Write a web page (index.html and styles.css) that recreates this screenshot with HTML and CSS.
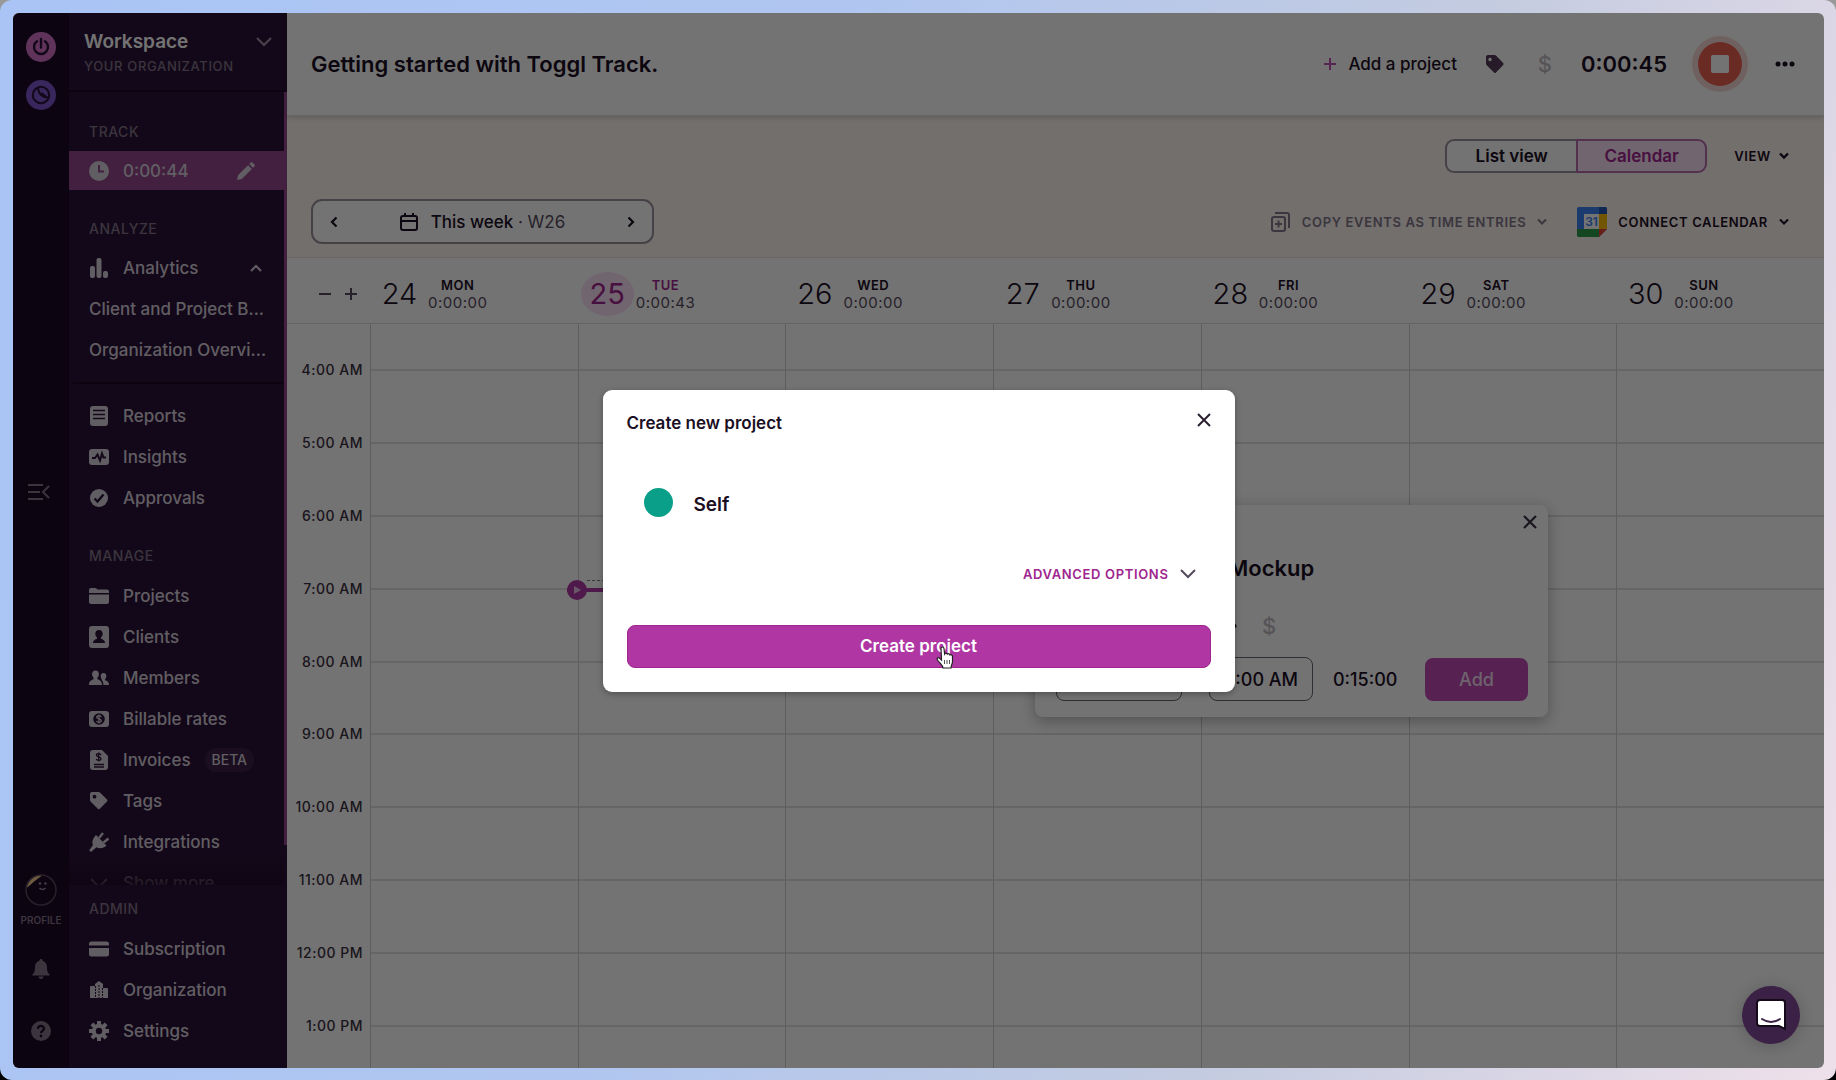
FILE: index.html
```html
<!DOCTYPE html>
<html lang="en">
<head>
    <meta charset="UTF-8">
    <meta name="viewport" content="width=device-width, initial-scale=1.0">
    <title>Toggl Track</title>
    <link rel="stylesheet" href="styles.css">
</head>
<body>
    <div class="app">
        <aside class="rail">
            <a href="#" class="rail-logo" aria-label="Toggl Track">
                <svg width="30" height="30" viewBox="0 0 30 30"><circle cx="15" cy="15" r="15" fill="#d474c8"/><g fill="none" stroke="#2c1338" stroke-width="2.4" stroke-linecap="round"><path d="M11 9.2a7 7 0 1 0 8 0"/><path d="M15 7v8.5"/></g></svg>
            </a>
            <a href="#" class="rail-logo" aria-label="Toggl Plan">
                <svg width="30" height="30" viewBox="0 0 30 30"><circle cx="15" cy="15" r="15" fill="#7e54cc"/><g fill="none" stroke="#2c1338" stroke-width="2"><circle cx="15" cy="15" r="8.2"/><path d="M12 7.500c0 6 4.500 10.500 11 10M15.500 13l6 5"/></g></svg>
            </a>
            <button class="rail-toggle" aria-label="Collapse menu">
                <svg width="22" height="16" viewBox="0 0 22 16" fill="none" stroke="currentColor" stroke-width="2"><path d="M0 1h15M0 8h12M0 15h15M21 2l-6 6 6 6"/></svg>
            </button>
            <a href="#" class="profile">
                <svg width="32" height="32" viewBox="0 0 32 32"><path d="M1.500 14A15 15 0 0 1 17.500 1.200C12 5 6 10 1.500 14z" fill="#f5c98e"/><circle cx="16" cy="16" r="15" fill="none" stroke="#564a5d" stroke-width="1.500"/><g fill="#9c8fa3"><circle cx="15" cy="9.500" r="1.200"/><circle cx="20.500" cy="9.500" r="1.200"/></g><path d="M14.500 14q3 3 6 0" stroke="#9c8fa3" stroke-width="1.500" fill="none"/></svg>
                <span>PROFILE</span>
            </a>
            <button class="rail-btn" aria-label="Notifications">
                <svg width="18" height="20" viewBox="0 0 18 20" fill="currentColor"><path d="M9 0c1 0 1.600.7 1.600 1.700C13.500 2.500 15 5 15 8c0 4 .7 6 2.500 7.300V16.500H.5v-1.200C2.300 14 3 12 3 8c0-3 1.500-5.500 4.400-6.300C7.400.7 8 0 9 0zM6.500 17.500h5a2.500 2.500 0 0 1-5 0z"/></svg>
            </button>
            <button class="rail-btn" aria-label="Help">
                <svg width="20" height="20" viewBox="0 0 20 20"><circle cx="10" cy="10" r="10" fill="currentColor"/><path d="M7 7.800C7 4 13 4 13 7.600c0 2.200-3 2.200-3 4.400" fill="none" stroke="#1d0928" stroke-width="2.200"/><circle cx="10" cy="15" r="1.400" fill="#1d0928"/></svg>
            </button>
        </aside>

        <nav class="sidebar">
            <button class="workspace">
                <span class="workspace-name">Workspace</span>
                <svg width="16" height="10" viewBox="0 0 16 10" fill="none" stroke="#a294a8" stroke-width="2"><path d="M1 1l7 7 7-7"/></svg>
                <span class="workspace-org">YOUR ORGANIZATION</span>
            </button>

            <div class="menu">
                <h2>TRACK</h2>
                <a href="#" class="item active">
                    <svg width="20" height="20" viewBox="0 0 20 20"><circle cx="10" cy="10" r="10" fill="currentColor"/><path d="M10 4v6.500h5" fill="none" stroke="#94478e" stroke-width="2"/></svg>
                    <span>0:00:44</span>
                    <svg class="end" width="18" height="18" viewBox="0 0 18 18" fill="currentColor"><path d="M0 18l1-4.800L11 3.200l3.800 3.800-10 10zM12.300 2l1.500-1.500q.8-.8 1.600 0L17.500 2.600q.8.8 0 1.600L16 5.700z"/></svg>
                </a>
                <h2>ANALYZE</h2>
                <a href="#" class="item">
                    <svg width="20" height="20" viewBox="0 0 20 20" fill="currentColor"><rect x="1" y="8" width="5" height="12" rx="2"/><rect x="7.500" y="0" width="5" height="20" rx="2"/><rect x="14" y="13" width="5" height="7" rx="2"/></svg>
                    <span>Analytics</span>
                    <svg class="caret" width="12" height="8" viewBox="0 0 12 8" fill="none" stroke="currentColor" stroke-width="2"><path d="M1 7l5-5 5 5"/></svg>
                </a>
                <a href="#" class="item"><span>Client and Project B...</span></a>
                <a href="#" class="item"><span>Organization Overvi...</span></a>
                <hr>
                <a href="#" class="item">
                    <svg width="20" height="20" viewBox="0 0 20 20"><rect x="1" y="0" width="18" height="20" rx="3" fill="currentColor"/><path d="M4 4.500h12M4 8.500h12M4 12.500h12" stroke="#2c1338" stroke-width="1.600"/></svg>
                    <span>Reports</span>
                </a>
                <a href="#" class="item">
                    <svg width="20" height="20" viewBox="0 0 20 20"><rect x="0" y="2" width="20" height="16" rx="3" fill="currentColor"/><path d="M3 11h3l2.500-3.500 2.500 6 2-7 1.500 4H17" fill="none" stroke="#2c1338" stroke-width="2"/></svg>
                    <span>Insights</span>
                </a>
                <a href="#" class="item">
                    <svg width="20" height="20" viewBox="0 0 20 20"><circle cx="10" cy="10" r="9" fill="currentColor"/><path d="M5.500 10.500l3 3 6-7" fill="none" stroke="#2c1338" stroke-width="2.400"/></svg>
                    <span>Approvals</span>
                </a>
                <h2 class="manage">MANAGE</h2>
                <a href="#" class="item">
                    <svg width="20" height="20" viewBox="0 0 20 20" fill="currentColor"><path d="M0 7V4q0-2 2-2h4q1.500 0 2.500 1.500h9.500q2 0 2 2V7zM0 8.500h20V16q0 2-2 2H2q-2 0-2-2z"/></svg>
                    <span>Projects</span>
                </a>
                <a href="#" class="item">
                    <svg width="20" height="22" viewBox="0 0 20 22"><rect width="20" height="22" rx="3" fill="currentColor"/><path d="M10 4c2.400 0 3.700 1.600 3.700 3.800 0 1.700-.7 2.800-1.700 3.700v1.300c2 .7 4 1.600 4 4.200H4c0-2.600 2-3.500 4-4.200v-1.300C7 10.600 6.300 9.500 6.300 7.800 6.300 5.600 7.600 4 10 4z" fill="#2c1338"/></svg>
                    <span>Clients</span>
                </a>
                <a href="#" class="item">
                    <svg width="20" height="20" viewBox="0 0 20 20" fill="currentColor"><path d="M6.500 2.500c2.200 0 3.400 1.500 3.400 3.600 0 1.700-.6 2.700-1.500 3.600v1.600c2.500.9 4.600 1.800 4.600 5.700H0c0-3.900 2.100-4.800 4.600-5.700V9.700C3.700 8.800 3.100 7.800 3.100 6.100c0-2.100 1.200-3.600 3.400-3.600z"/><path d="M14.500 5c1.800 0 2.800 1.200 2.800 3 0 1.400-.5 2.200-1.200 3v1.300c2.100.8 3.900 1.500 3.900 4.700h-5.600c0-2.500-.7-4-2-5.200l.5-.8c-.7-.8-1.200-1.600-1.200-3 0-1.800 1-3 2.800-3z"/></svg>
                    <span>Members</span>
                </a>
                <a href="#" class="item">
                    <svg width="20" height="20" viewBox="0 0 20 20"><rect y="2" width="20" height="16" rx="3" fill="currentColor"/><circle cx="10" cy="10" r="5.800" fill="#2c1338"/><path d="M12.300 8.200c-.4-2-4.600-2-4.600 0s4.600 1.500 4.600 3.600-4.300 2-4.700 0M10 5.500v9" fill="none" stroke="currentColor" stroke-width="1.300"/></svg>
                    <span>Billable rates</span>
                </a>
                <a href="#" class="item">
                    <svg width="20" height="20" viewBox="0 0 20 20"><path d="M1 3q0-3 3-3h9l6 6v11q0 3-3 3H4q-3 0-3-3z" fill="currentColor"/><path d="M12 5.200c-.4-2-4.600-2-4.600 0s4.600 1.500 4.600 3.600-4.300 2-4.700 0M9.700 2.500v9M5 14.500h10M5 17h10" fill="none" stroke="#2c1338" stroke-width="1.300"/></svg>
                    <span>Invoices</span>
                    <span class="beta">BETA</span>
                </a>
                <a href="#" class="item">
                    <svg width="20" height="20" viewBox="0 0 20 20" fill="currentColor" fill-rule="evenodd"><path d="M1 3q0-2 2-2h6.500q1 0 1.700.7l6.800 6.800q1 1 0 2l-7.200 7.300q-1 1-2 0L2 11Q1 10 1 9zM5.500 3.800a1.900 1.900 0 1 0 .01 0z"/></svg>
                    <span>Tags</span>
                </a>
                <a href="#" class="item">
                    <svg width="20" height="20" viewBox="0 0 20 20" fill="currentColor"><path d="M7 3l10.500 10.500c-3 3-7 3.600-10 1.700L2 20l-1.800-1.800L4 13C2.500 10 4 6 7 3z"/><path d="M10 6l4-5M14.500 10.500l5-4" stroke="currentColor" stroke-width="2.400"/></svg>
                    <span>Integrations</span>
                </a>
                <a href="#" class="item more">
                    <svg width="20" height="20" viewBox="0 0 20 20" fill="none" stroke="currentColor" stroke-width="2"><path d="M2 6l8 8 8-8"/></svg>
                    <span>Show more</span>
                </a>
            </div>

            <div class="admin">
                <h2>ADMIN</h2>
                <a href="#" class="item">
                    <svg width="20" height="20" viewBox="0 0 20 20" fill="currentColor"><path d="M0 6.500V5q0-2.500 2.500-2.500h15Q20 2.500 20 5v1.500zM0 9h20v6q0 2.500-2.500 2.500h-15Q0 17.500 0 15z"/></svg>
                    <span>Subscription</span>
                </a>
                <a href="#" class="item">
                    <svg width="20" height="20" viewBox="0 0 20 20"><path d="M1 18V7q0-1 1-1h4V4l4-3 4 3v4h4q1 0 1 1v9z" fill="currentColor"/><path d="M6.500 6v12M13.500 8v10M10 5v13" stroke="#2c1338" stroke-width="1" stroke-dasharray="2 1"/></svg>
                    <span>Organization</span>
                </a>
                <a href="#" class="item">
                    <svg width="20" height="20" viewBox="0 0 20 20"><circle cx="10" cy="10" r="5.200" fill="none" stroke="currentColor" stroke-width="4"/><g stroke="currentColor" stroke-width="4"><path d="M10 0v4M10 16v4M0 10h4M16 10h4M2.900 2.900l2.900 2.900M14.200 14.200l2.900 2.900M2.900 17.100l2.900-2.900M14.200 5.800l2.900-2.900"/></g></svg>
                    <span>Settings</span>
                </a>
            </div>
        </nav>

        <main>
            <header class="timer">
                <h1>Getting started with Toggl Track.</h1>
                <button class="add-project">
                    <svg width="12" height="12" viewBox="0 0 12 12" stroke="#c050b5" stroke-width="2"><path d="M6 0v12M0 6h12"/></svg>
                    Add a project
                </button>
                <button class="tool" aria-label="Tags">
                    <svg width="20" height="20" viewBox="0 0 20 20" fill="#553a5c" fill-rule="evenodd"><path d="M1 3q0-2 2-2h6.500q1 0 1.700.7l7 7.300q1 1 0 2l-7.200 7.500q-1 1-2 0L2 11.500Q1 10.500 1 9.500zM5 3.800a1.700 1.700 0 1 0 .01 0z"/></svg>
                </button>
                <button class="tool dollar" aria-label="Billable">$</button>
                <span class="time">0:00:45</span>
                <button class="stop" aria-label="Stop timer"></button>
                <button class="tool dots" aria-label="More">
                    <svg width="20" height="6" viewBox="0 0 20 6" fill="#1c0f24"><circle cx="3" cy="3" r="2.500"/><circle cx="10" cy="3" r="2.500"/><circle cx="17" cy="3" r="2.500"/></svg>
                </button>
            </header>

            <section class="toolbar">
                <div class="toolbar-row">
                    <div class="tabs">
                        <button>List view</button>
                        <button class="selected">Calendar</button>
                    </div>
                    <button class="caps">VIEW
                        <svg width="10" height="8" viewBox="0 0 10 8" fill="none" stroke="currentColor" stroke-width="2.400"><path d="M1 1.500l4 4 4-4"/></svg>
                    </button>
                </div>
                <div class="toolbar-row">
                    <div class="week">
                        <button aria-label="Previous week"><svg width="8" height="12" viewBox="0 0 8 12" fill="none" stroke="currentColor" stroke-width="2.200"><path d="M6.500 1.500L2 6l4.500 4.500"/></svg></button>
                        <button class="week-label">
                            <svg width="18" height="20" viewBox="0 0 18 20" fill="none" stroke="currentColor" stroke-width="2"><rect x="1" y="4" width="16" height="14" rx="2"/><path d="M1 9h16M5 1v4M13 1v4"/></svg>
                            <span>This week <em>· W26</em></span>
                        </button>
                        <button aria-label="Next week"><svg width="8" height="12" viewBox="0 0 8 12" fill="none" stroke="currentColor" stroke-width="2.200"><path d="M1.500 1.500L6 6l-4.500 4.500"/></svg></button>
                    </div>
                    <button class="caps copy">
                        <svg width="20" height="20" viewBox="0 0 20 20" fill="none" stroke="currentColor" stroke-width="2"><rect x="1" y="5" width="13" height="14" rx="2"/><path d="M4 1h12q2 0 2 2v13M7.500 8.500v7M4 12h7"/></svg>
                        COPY EVENTS AS TIME ENTRIES
                        <svg width="10" height="8" viewBox="0 0 10 8" fill="none" stroke="currentColor" stroke-width="2"><path d="M1 1.500l4 4 4-4"/></svg>
                    </button>
                    <button class="caps">
                        <svg width="30" height="30" viewBox="0 0 30 30"><path d="M0 2q0-2 2-2h26q2 0 2 2v20l-8 8H2q-2 0-2-2z" fill="#3c80f2"/><path d="M22 0h6q2 0 2 2v5h-8z" fill="#2458b8"/><path d="M22 7h8v15h-8z" fill="#fbbc04"/><path d="M0 22h22v8H2q-2 0-2-2z" fill="#2c9c4b"/><path d="M22 22h8l-8 8z" fill="#ea4335"/><path d="M7 7h15v15H7z" fill="#fff"/><text x="14.500" y="19" text-anchor="middle" class="gcal">31</text></svg>
                        CONNECT CALENDAR
                        <svg width="10" height="8" viewBox="0 0 10 8" fill="none" stroke="currentColor" stroke-width="2"><path d="M1 1.500l4 4 4-4"/></svg>
                    </button>
                </div>
            </section>

            <div class="days">
                <div class="zoom">
                    <button aria-label="Zoom out"><svg width="12" height="12" viewBox="0 0 12 12" stroke="currentColor" stroke-width="2"><path d="M0 6h12"/></svg></button>
                    <button aria-label="Zoom in"><svg width="12" height="12" viewBox="0 0 12 12" stroke="currentColor" stroke-width="2"><path d="M6 0v12M0 6h12"/></svg></button>
                </div>
                <div class="day"><span class="num">24</span><div><b>MON</b><span>0:00:00</span></div></div>
                <div class="day today"><span class="num">25</span><div><b>TUE</b><span>0:00:43</span></div></div>
                <div class="day"><span class="num">26</span><div><b>WED</b><span>0:00:00</span></div></div>
                <div class="day"><span class="num">27</span><div><b>THU</b><span>0:00:00</span></div></div>
                <div class="day"><span class="num">28</span><div><b>FRI</b><span>0:00:00</span></div></div>
                <div class="day"><span class="num">29</span><div><b>SAT</b><span>0:00:00</span></div></div>
                <div class="day"><span class="num">30</span><div><b>SUN</b><span>0:00:00</span></div></div>
            </div>

            <div class="grid">
                <div class="hour first"></div>
                <div class="hour"><span>4:00 AM</span></div>
                <div class="hour"><span>5:00 AM</span></div>
                <div class="hour"><span>6:00 AM</span></div>
                <div class="hour"><span>7:00 AM</span></div>
                <div class="hour"><span>8:00 AM</span></div>
                <div class="hour"><span>9:00 AM</span></div>
                <div class="hour"><span>10:00 AM</span></div>
                <div class="hour"><span>11:00 AM</span></div>
                <div class="hour"><span>12:00 PM</span></div>
                <div class="hour"><span>1:00 PM</span></div>
                <div class="columns">
                    <div></div>
                    <div>
                        <div class="now">
                            <svg width="20" height="20" viewBox="0 0 20 20"><circle cx="10" cy="10" r="10" fill="#b03aa6"/><path d="M7 6l7 4-7 4z" fill="#e8c4e4"/></svg>
                        </div>
                    </div>
                    <div></div>
                    <div></div>
                    <div></div>
                    <div></div>
                    <div></div>
                </div>

                <form class="entry">
                    <button type="button" class="close" aria-label="Close"><svg width="14" height="14" viewBox="0 0 14 14" stroke="#3c2f42" stroke-width="2.200"><path d="M1 1l12 12M13 1L1 13"/></svg></button>
                    <input class="entry-name" aria-label="Description" value="Mockup">
                    <div class="entry-tools">
                        <svg width="20" height="20" viewBox="0 0 20 20" fill="#1c0f24"><path d="M1 3q0-2 2-2h6.500q1 0 1.700.7l7 7.300q1 1 0 2l-7.200 7.500q-1 1-2 0L2 11.500Q1 10.500 1 9.500z"/></svg>
                        <span class="dollar">$</span>
                    </div>
                    <div class="entry-times">
                        <input class="from" aria-label="Start" value="">
                        <input class="to" aria-label="End" value="6:00 AM">
                        <span>0:15:00</span>
                        <button type="button">Add</button>
                    </div>
                </form>
            </div>
        </main>

        <div class="overlay">
            <form class="modal" role="dialog" aria-label="Create new project">
                <div class="modal-head">
                    <h2>Create new project</h2>
                    <button type="button" aria-label="Close"><svg width="14" height="14" viewBox="0 0 14 14" stroke="#2b2030" stroke-width="2"><path d="M1 1l12 12M13 1L1 13"/></svg></button>
                </div>
                <div class="modal-name">
                    <button type="button" class="color" aria-label="Project color"></button>
                    <input aria-label="Project name" value="Self">
                </div>
                <button type="button" class="advanced">ADVANCED OPTIONS
                    <svg width="16" height="10" viewBox="0 0 16 10" fill="none" stroke="#564a5d" stroke-width="2"><path d="M1 1l7 7 7-7"/></svg>
                </button>
                <button type="button" class="create">Create project
                    <svg class="pointer" width="18" height="24" viewBox="0 0 18 24"><path d="M5 2.500c0-2 2.800-2 3 0l.6 5.500c.6-1.200 2.400-1 2.700.2.900-.9 2.300-.5 2.500.7 1.200-.6 2.700.1 2.700 1.600v5c0 2.500-1.500 3.500-1.500 6.500H7c0-2.500-3-4.500-5.500-8-1.200-1.800.8-3 2.200-1.600L5.500 14z" fill="#fff" stroke="#222" stroke-width="1.200"/><path d="M8.500 14v4M11 14v4M13.500 14v4" stroke="#555" stroke-width="1"/></svg>
                </button>
            </form>
        </div>

        <button class="chat" aria-label="Open chat">
            <svg width="32" height="34" viewBox="0 0 32 34"><path d="M5 2h22q3 0 3 3v26l-6-3H5q-3 0-3-3V5q0-3 3-3z" fill="#fff" stroke="#150a1a" stroke-width="2"/><path d="M7 21q9 6 18 0" fill="none" stroke="#3b2145" stroke-width="2" stroke-linecap="round"/></svg>
        </button>
    </div>
</body>
</html>
```

FILE: styles.css
```css
* {
    box-sizing: border-box;
}
html {
    background: linear-gradient(#999, #000);
}
body {
    margin: 0;
    height: 100vh;
    padding: 13px 12px 12px 13px;
    border-radius: 12px;
    background: linear-gradient(105deg, #a9c4f5 0%, #b0c6f0 40%, #c3cbe0 70%, #eee0ea 100%);
    font-family: Inter, "Liberation Sans", sans-serif;
    font-size: 17px;
    font-weight: 500;
    color: #1c0f24;
}
h1, h2 {
    margin: 0;
}
button, input {
    font: inherit;
    color: inherit;
    background: none;
    border: none;
    padding: 0;
}
button {
    display: flex;
    align-items: center;
    justify-content: center;
    cursor: pointer;
}
a {
    color: inherit;
    text-decoration: none;
}
svg {
    flex: none;
    display: block;
}
.app {
    position: relative;
    display: flex;
    height: 100%;
    border-radius: 6px;
    overflow: hidden;
    background: #fff;
}

/* left rail */
.rail {
    width: 56px;
    background: #1d0928;
    color: #83758a;
    display: flex;
    flex-direction: column;
    align-items: center;
    gap: 18px;
    padding: 19px 0 27px;
}
.rail-toggle {
    margin: auto 0;
    padding-right: 4px;
}
.profile {
    display: flex;
    flex-direction: column;
    align-items: center;
    gap: 8px;
    font-size: 10px;
    line-height: 12px;
    font-weight: 600;
}
.rail-btn {
    height: 32px;
    margin-top: 9px;
}
.rail-btn:last-child {
    height: 20px;
    margin-top: 18px;
}

/* sidebar */
.sidebar {
    width: 218px;
    background: #2c1338;
    color: #d8d0dc;
    display: flex;
    flex-direction: column;
}
.sidebar h2 {
    font-size: 14px;
    line-height: 20px;
    font-weight: 500;
    letter-spacing: 0.5px;
    color: #83758a;
    padding-left: 20px;
}
.workspace {
    height: 79px;
    padding: 15px 15px 0 15px;
    display: grid;
    grid-template-columns: 1fr auto;
    align-content: start;
    align-items: center;
    text-align: left;
    border-bottom: 2px solid #1d0928;
}
.workspace-name {
    font-size: 19px;
    line-height: 28px;
    font-weight: 600;
    color: #fff;
}
.workspace-org {
    font-size: 13px;
    line-height: 20px;
    letter-spacing: 0.05em;
    color: #83758a;
}
.menu {
    position: relative;
    flex: 1;
    min-height: 0;
    overflow: hidden;
    padding-top: 30px;
}
.menu::before {
    content: "";
    position: absolute;
    top: 0;
    right: 0;
    width: 3px;
    height: 95%;
    background: #94478e;
}
.menu::after {
    content: "";
    position: absolute;
    left: 0;
    right: 3px;
    bottom: 0;
    height: 30px;
    background: linear-gradient(transparent, rgba(29, 9, 40, 0.7));
}
.item {
    display: flex;
    align-items: center;
    gap: 14px;
    height: 41px;
    padding: 0 20px;
    white-space: nowrap;
}
.active {
    height: 39px;
    margin: 9px 0 29px;
    background: #94478e;
}
.active .end {
    margin-left: auto;
    margin-right: 12px;
}
.menu h2 + .item:not(.active) {
    margin-top: 8px;
}
.caret {
    margin-left: auto;
    margin-right: 5px;
}
.menu hr {
    margin: 12px 4px 11px;
    border: none;
    border-top: 2px solid #1d0928;
}
.menu .manage {
    margin-top: 28px;
}
.menu .manage + .item:not(.active) {
    margin-top: 9px;
}
.beta {
    font-size: 14px;
    line-height: 24px;
    padding: 0 7px;
    border-radius: 12px;
    background: #3a2147;
}
.more {
    color: #a294a8;
}
.admin {
    padding: 14px 0 17px;
}
.admin h2 {
    margin-bottom: 9px;
}

/* running timer */
main {
    flex: 1;
    min-width: 0;
    display: flex;
    flex-direction: column;
}
.timer {
    height: 103px;
    padding: 0 24px;
    display: flex;
    align-items: center;
    border-bottom: 1px solid #e0dcdc;
    box-shadow: 0 2px 4px rgba(0, 0, 0, 0.15);
    z-index: 1;
}
.timer h1 {
    flex: 1;
    font-size: 22px;
    font-weight: 600;
}
.add-project {
    gap: 12px;
    margin-right: 28px;
}
.tool {
    width: 20px;
    margin-right: 30px;
}
.dollar {
    font-size: 22px;
    font-weight: 500;
    color: #c0bac2;
}
.time {
    font-size: 22px;
    font-weight: 600;
}
.stop {
    width: 44px;
    height: 44px;
    margin: 0 33px 0 31px;
    border-radius: 50%;
    background: #ec6150;
    box-shadow: 0 0 0 6px #f5d8d4;
}
.stop::before {
    content: "";
    width: 18px;
    height: 18px;
    border-radius: 2px;
    background: #fff;
}
.dots {
    margin-right: 5px;
}
.timer .tool.dollar {
    margin-right: 26px;
}

/* view controls */
.toolbar {
    height: 142px;
    padding: 23px 35px 0 24px;
    background: #fef5f1;
    border-bottom: 1px solid #ebe2e0;
}
.toolbar-row {
    display: flex;
    align-items: center;
    justify-content: flex-end;
    gap: 27px;
}
.toolbar-row + .toolbar-row {
    margin-top: 26px;
    gap: 30px;
}
.tabs {
    display: flex;
    height: 34px;
    font-weight: 600;
}
.tabs button {
    width: 131px;
    border: 2px solid #9a919d;
    border-right: none;
    border-radius: 9px 0 0 9px;
    background: #fff;
}
.tabs .selected {
    border: 2px solid #b56bae;
    border-radius: 0 9px 9px 0;
    background: #fbdff6;
    color: #a0258f;
}
.caps {
    gap: 11px;
    font-size: 13px;
    font-weight: 600;
    letter-spacing: 0.05em;
    white-space: nowrap;
}
.tabs + .caps {
    gap: 8px;
}
.copy {
    color: #83788a;
}
.gcal {
    font-size: 12px;
    letter-spacing: 0;
    fill: #3c80f2;
}
.week {
    display: flex;
    width: 343px;
    height: 45px;
    margin-right: auto;
    padding: 0 17px;
    border: 2px solid #9a919d;
    border-radius: 11px;
    background: #fff;
}
.week-label {
    flex: 1;
    gap: 13px;
}
.week em {
    font-style: normal;
    font-weight: 400;
    color: #564a5d;
}

/* calendar */
.days {
    display: grid;
    grid-template-columns: 83px repeat(7, 1fr);
    height: 66px;
    padding-top: 7px;
    border-bottom: 1px solid #dedada;
}
.zoom {
    display: flex;
    gap: 14px;
    padding-left: 32px;
    color: #564a5d;
}
.day {
    display: flex;
    align-items: center;
    padding-left: 3px;
    line-height: 17px;
    text-align: center;
}
.num {
    width: 53px;
    margin-right: 2px;
    font-size: 29px;
    line-height: 44px;
    font-weight: 300;
    border-radius: 50%;
}
.day b {
    display: block;
    font-size: 13px;
    font-weight: 600;
    letter-spacing: 0.5px;
}
.day div span {
    font-size: 15px;
    font-weight: 400;
    letter-spacing: 0.5px;
    color: #564a5d;
}
.today .num {
    background: #fbdff6;
    font-weight: 400;
}
.today .num, .today b {
    color: #a0258f;
}
.grid {
    position: relative;
    flex: 1;
    min-height: 0;
    display: grid;
    grid-template-rows: 45px repeat(9, 1fr) 43px;
}
.hour {
    margin-left: 83px;
    border-top: 2px solid #e4e0e0;
}
.hour.first {
    border: none;
}
.hour span {
    display: block;
    width: 83px;
    margin: -11px 0 0 -83px;
    padding-right: 7px;
    font-size: 14px;
    line-height: 20px;
    letter-spacing: 0.5px;
    text-align: right;
    color: #3c2f42;
}
.columns {
    position: absolute;
    inset: 0 0 0 83px;
    display: grid;
    grid-template-columns: repeat(7, 1fr);
}
.columns > div {
    position: relative;
    border-left: 1px solid #d2cece;
}
.now {
    position: absolute;
    top: 264px;
    left: -12px;
    right: 0;
    height: 4px;
    background: #b03aa6;
}
.now::after {
    content: "";
    position: absolute;
    top: -8px;
    left: 20px;
    right: 0;
    border-top: 1px dashed #83758a;
}
.now svg {
    margin-top: -8px;
}

/* new entry popup */
.entry {
    position: absolute;
    top: 181px;
    right: 276px;
    width: 513px;
    height: 212px;
    padding: 10px 20px 16px 21px;
    border-radius: 8px;
    background: #fff;
    box-shadow: 0 4px 16px rgba(0, 0, 0, 0.3);
    display: flex;
    flex-direction: column;
}
.entry .close {
    align-self: flex-end;
    margin-right: -9px;
}
.entry-name {
    margin: 24px 0 0 172px;
    height: 30px;
    width: 240px;
    font-size: 22px;
    font-weight: 600;
}
.entry-tools {
    display: flex;
    align-items: center;
    gap: 24px;
    padding-left: 162px;
    margin-top: 30px;
}
.entry-times {
    display: flex;
    align-items: center;
    gap: 20px;
    margin-top: auto;
    font-size: 18px;
}
.entry-times input {
    width: 104px;
    height: 44px;
    padding: 0 14px;
    border: 1px solid #6f6475;
    border-radius: 8px;
    text-align: right;
}
.entry-times .from {
    width: 126px;
    margin-right: 7px;
}
.entry-times button {
    width: 103px;
    height: 43px;
    margin-left: auto;
    border-radius: 8px;
    background: #c04cb5;
    color: #f3dcf0;
}

/* dialog */
.overlay {
    position: absolute;
    inset: 0;
    z-index: 2;
    display: flex;
    align-items: center;
    justify-content: center;
    background: rgba(0, 0, 0, 0.55);
}
.modal {
    width: 632px;
    padding: 23px 24px 24px;
    border-radius: 9px;
    background: #fff;
    box-shadow: 0 2px 6px rgba(0, 0, 0, 0.3);
}
.modal-head {
    display: flex;
    align-items: flex-start;
    justify-content: space-between;
    height: 20px;
}
.modal-head h2 {
    font-size: 17px;
    line-height: 20px;
    font-weight: 600;
}
.modal-name {
    display: flex;
    align-items: center;
    gap: 21px;
    margin: 54px 0 0 17px;
}
.modal-name input {
    padding-top: 4px;
    font-size: 19px;
    line-height: 28px;
    font-weight: 600;
}
.color {
    width: 29px;
    height: 29px;
    border-radius: 50%;
    background: #0a9f88;
}
.advanced {
    gap: 11px;
    margin: 45px 15px 41px auto;
    font-size: 13px;
    line-height: 20px;
    font-weight: 600;
    letter-spacing: 0.05em;
    color: #a0258f;
}
.create {
    position: relative;
    width: 100%;
    height: 43px;
    border: 1px solid #a0258f;
    border-radius: 8px;
    background: #b037a3;
    color: #fff;
    font-weight: 600;
}
.pointer {
    position: absolute;
    left: 53%;
    top: 20px;
}
.chat {
    position: absolute;
    right: 24px;
    bottom: 24px;
    z-index: 3;
    width: 58px;
    height: 58px;
    border-radius: 50%;
    background: #3b2145;
    box-shadow: 0 2px 16px rgba(0, 0, 0, 0.2);
}
```
